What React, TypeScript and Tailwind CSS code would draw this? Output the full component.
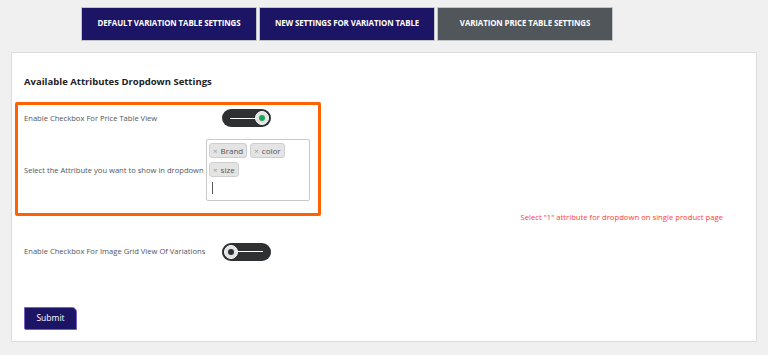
import React from 'react'

const tabs = [
  { label: 'DEFAULT VARIATION TABLE SETTINGS', active: false },
  { label: 'NEW SETTINGS FOR VARIATION TABLE', active: false },
  { label: 'VARIATION PRICE TABLE SETTINGS', active: true },
]

function Toggle({ on }: { on: boolean }) {
  return (
    <div className="relative w-[49px] h-[18px] rounded-full bg-[#2e3032]">
      {on ? (
        <>
          <div className="absolute left-[8px] right-[14px] top-[8.5px] h-px bg-white" />
          <div className="absolute right-[2px] top-[2px] w-[14px] h-[14px] rounded-full bg-[#e3e3e3] border border-white flex items-center justify-center">
            <div className="w-[6px] h-[6px] rounded-full bg-[#1ea35b]" />
          </div>
        </>
      ) : (
        <>
          <div className="absolute left-[14px] right-[8px] top-[8.5px] h-px bg-white" />
          <div className="absolute left-[2px] top-[2px] w-[14px] h-[14px] rounded-full bg-[#e3e3e3] border border-white flex items-center justify-center">
            <div className="w-[6px] h-[6px] rounded-full bg-[#2e3032]" />
          </div>
        </>
      )}
    </div>
  )
}

function Tag({ text }: { text: string }) {
  return (
    <span className="inline-flex items-center h-[15px] px-[3px] gap-[3px] rounded-[3px] border border-[#cfcfcf] bg-[#e4e4e4] text-[8px] text-[#555]">
      <span className="text-[#999]">×</span>
      {text}
    </span>
  )
}

export default function App() {
  return (
    <div
      className="w-full h-[355px] overflow-hidden bg-[#f0f0f1] text-[#50575e]"
      style={{ fontFamily: '"Open Sans", "Noto Sans", sans-serif' }}
    >
      {/* Tabs */}
      <div className="flex gap-[2px] pl-[81px] pt-[7px]">
        {tabs.map((t) => (
          <div
            key={t.label}
            className={`w-[176px] h-[34px] flex items-center justify-center border border-[#c3c4c7] text-white font-bold text-[7.9px] tracking-[-0.1px] ${
              t.active ? 'bg-[#50565a]' : 'bg-[#1c1565]'
            }`}
          >
            {t.label}
          </div>
        ))}
      </div>

      {/* Panel */}
      <div className="mx-[11px] mt-[11px] h-[290px] bg-white border border-[#dcdcde] pt-[22px] px-[3px]">
        <h2 className="pl-[9px] text-[9.5px] font-bold text-[#1d2327]">
          Available Attributes Dropdown Settings
        </h2>

        {/* Highlighted box */}
        <div className="mt-[13px] w-[306px] h-[114px] border-[3px] border-[#ff6100] rounded-[2px] pl-[6px] pt-[4px]">
          <div className="flex items-center h-[18px]">
            <span className="w-[182px] text-[7.6px]">Enable Checkbox For Price Table View</span>
            <div className="ml-[16px]">
              <Toggle on />
            </div>
          </div>
          <div className="flex items-center mt-[12px]">
            <span className="w-[182px] text-[7.6px] whitespace-nowrap">Select the Attribute you want to show in dropdown</span>
            <div className="w-[104px] h-[62px] border border-[#c9c9c9] rounded-[2px] bg-white px-[2px] pt-[3px]">
              <div className="flex flex-wrap gap-x-[3px] gap-y-[4px]">
                <Tag text="Brand" />
                <Tag text="color" />
                <Tag text="size" />
              </div>
              <div className="mt-[5px] ml-[3px] w-px h-[12px] bg-[#555]" />
            </div>
          </div>
        </div>

        <div className="flex justify-end pr-[30px] -mt-[4px]">
          <span className="text-[7.7px] text-[#ff3b3b]">Select "1" attribute for dropdown on single product page</span>
        </div>

        <div className="flex items-center h-[18px] mt-[19px] pl-[9px]">
          <span className="w-[198px] text-[7.6px]">Enable Checkbox For Image Grid View Of Variations</span>
          <Toggle on={false} />
        </div>

        <button className="mt-[46px] ml-[9px] w-[53px] h-[23px] bg-[#1c1565] border border-[#7a5fbf] rounded-tr-[5px] rounded-bl-[2px] text-white text-[8.5px]">
          Submit
        </button>
      </div>
    </div>
  )
}
